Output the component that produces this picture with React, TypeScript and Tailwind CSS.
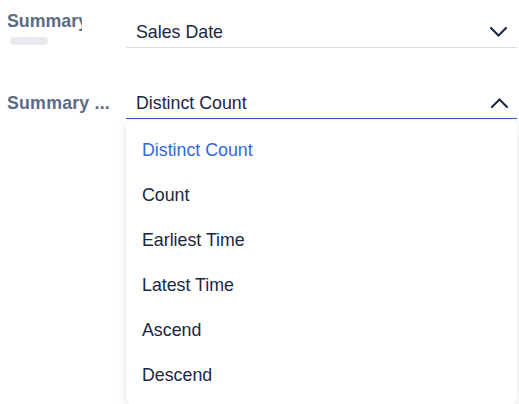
import React from "react";

const options = ["Distinct Count", "Count", "Earliest Time", "Latest Time", "Ascend", "Descend"];

const Chevron = ({ up = false }: { up?: boolean }) => (
  <svg width="17" height="10" viewBox="0 0 17 10" fill="none" className="shrink-0">
    <polyline
      points={up ? "1,9 8.5,1.5 16,9" : "1,1 8.5,8.5 16,1"}
      stroke="#1c2744"
      strokeWidth="2"
      strokeLinecap="square"
    />
  </svg>
);

export default function App() {
  return (
    <div
      className="w-[519px] h-[404px] overflow-hidden bg-white pl-[7px] pr-[2px] pt-[11px] text-[17.8px] text-[#1c2641]"
      style={{ fontFamily: '"Liberation Sans", Arial, sans-serif' }}
    >
      {/* first row */}
      <div className="flex items-start">
        <div className="w-[119px] shrink-0">
          <div className="w-[75px] overflow-hidden whitespace-nowrap font-bold leading-[20px] text-[#5d6b85]">
            Summary
          </div>
          <div className="mt-[6px] ml-[3px] h-[8px] w-[38px] rounded-full bg-[#e9eaef]" />
        </div>
        <div className="mt-[5px] flex h-[32px] flex-1 items-center justify-between border-b border-[#dcdde3] pl-[10px] pr-[10px]">
          <span className="leading-[20px]">Sales Date</span>
          <Chevron />
        </div>
      </div>

      {/* second row */}
      <div className="mt-[39px] flex items-center">
        <div className="w-[119px] shrink-0 whitespace-nowrap font-bold leading-[20px] tracking-[0.2px] text-[#5d6b85]">
          Summary ...
        </div>
        <div className="relative flex-1">
          <div className="flex h-[32px] items-center justify-between border-b border-[#2e5fcb] pl-[10px] pr-[9px]">
            <span className="leading-[20px]">Distinct Count</span>
            <Chevron up />
          </div>
          <ul className="absolute left-0 right-0 top-[33px] rounded-md bg-white pt-[8px] pb-[6px] shadow-[0_2px_10px_rgba(30,40,70,0.14)]">
            {options.map((o, i) => (
              <li
                key={o}
                className={`flex h-[45px] items-center pl-[16px] ${i === 0 ? "text-[#3168e0]" : "text-[#1c2641]"}`}
              >
                {o}
              </li>
            ))}
          </ul>
        </div>
      </div>
    </div>
  );
}
